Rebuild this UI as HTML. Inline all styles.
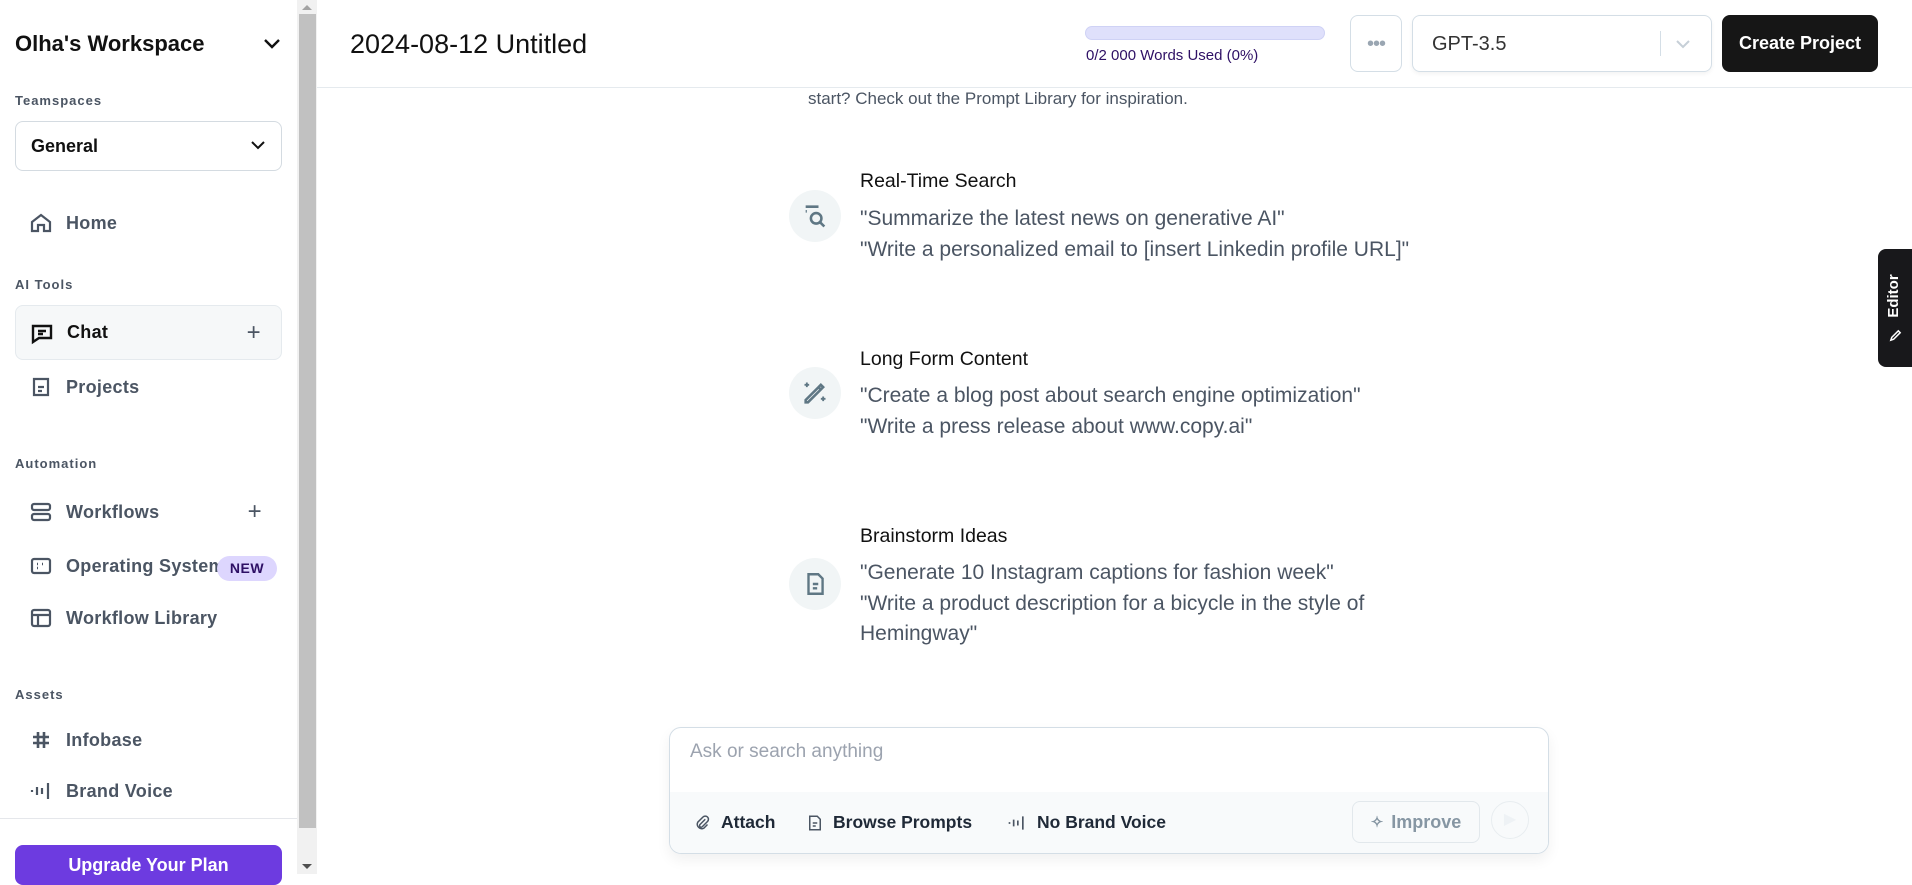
<!DOCTYPE html>
<html><head><meta charset="utf-8"><style>
*{box-sizing:border-box;margin:0;padding:0}
body{width:1912px;height:874px;overflow:hidden;background:#fff;font-family:"Liberation Sans",sans-serif;position:relative;color:#111}
.a{position:absolute}
.sec{position:absolute;left:15px;font-size:13px;color:#4b5563;font-weight:600;letter-spacing:1px}
.it{position:absolute;left:15px;width:267px;height:50px;display:flex;align-items:center;padding-left:14px;font-size:18px;font-weight:600;color:#4b5563;letter-spacing:.3px}
.it svg{width:24px;height:24px;margin-right:13px;flex:none}
.plus{position:absolute;right:20px;font-size:24px;font-weight:300;color:#4b5563}
.circ{position:absolute;left:789px;width:52px;height:52px;border-radius:50%;background:#f1f5f6;display:flex;align-items:center;justify-content:center}
.ttl{position:absolute;left:860px;font-size:19.5px;color:#111}
.ex{position:absolute;left:860px;font-size:21px;color:#4b5563;line-height:30.5px;width:580px}
.fb{position:absolute;top:812px;display:flex;align-items:center;font-size:17.5px;font-weight:600;color:#1f2937}
</style></head><body>
<div class="a" style="left:0;top:0;width:297px;height:874px;background:#fff"></div>
<div class="a" style="left:15px;top:31px;font-size:22px;font-weight:700;color:#111">Olha's Workspace</div>
<svg class="a" style="left:262px;top:36px" width="20" height="14" viewBox="0 0 20 14"><path d="M3 4l7 7 7-7" fill="none" stroke="#111" stroke-width="2.4"/></svg>
<div class="sec" style="top:93px">Teamspaces</div>
<div class="a" style="left:15px;top:121px;width:267px;height:50px;border:1px solid #d4dbe1;border-radius:8px"></div>
<div class="a" style="left:31px;top:136px;font-size:18px;font-weight:600">General</div>
<svg class="a" style="left:249px;top:139px" width="18" height="12" viewBox="0 0 18 12"><path d="M3 3l6 6 6-6" fill="none" stroke="#111" stroke-width="2"/></svg>
<div class="it" style="top:198px"><svg viewBox="0 0 24 24" fill="none" stroke="#4b5563" stroke-width="2.2"><path d="M3 11l9-7 9 7v9h-6v-6h-6v6H3z"/></svg>Home</div>
<div class="sec" style="top:277px">AI Tools</div>
<div class="it" style="top:305px;height:55px;background:#f6f8f9;border:1px solid #e5eaee;border-radius:8px;color:#111"><svg viewBox="0 0 24 24" fill="none" stroke="#111" stroke-width="2.4"><path d="M3 5h18v12H9l-6 4z"/><path d="M8 10h8M8 13h5"/></svg>Chat<span class="plus">+</span></div>
<div class="it" style="top:362px"><svg viewBox="0 0 24 24" fill="none" stroke="#4b5563" stroke-width="2.2"><path d="M5 4h14v16H5z"/><path d="M9 12h6M9 16h4"/></svg>Projects</div>
<div class="sec" style="top:456px">Automation</div>
<div class="it" style="top:487px"><svg viewBox="0 0 24 24" fill="none" stroke="#4b5563" stroke-width="2.2"><rect x="3" y="4" width="18" height="6" rx="2"/><rect x="3" y="14" width="18" height="6" rx="2"/></svg>Workflows<span class="plus">+</span></div>
<div class="it" style="top:541px;white-space:nowrap;overflow:visible"><svg viewBox="0 0 24 24" fill="none" stroke="#4b5563" stroke-width="2.2"><rect x="3" y="5" width="18" height="14" rx="2"/><path d="M8 10h1M13 10h1M8 14h1" stroke-width="2.5"/></svg>Operating System</div>
<div class="a" style="left:217px;top:556px;width:60px;height:25px;background:#ddd6fe;border-radius:13px;font-size:14px;font-weight:700;color:#2e1065;text-align:center;line-height:25px;letter-spacing:.5px">NEW</div>
<div class="it" style="top:593px"><svg viewBox="0 0 24 24" fill="none" stroke="#4b5563" stroke-width="2.2"><rect x="3" y="4" width="18" height="16" rx="2"/><path d="M3 9h18M9 9v11"/></svg>Workflow Library</div>
<div class="sec" style="top:687px">Assets</div>
<div class="it" style="top:715px"><svg viewBox="0 0 24 24" fill="none" stroke="#4b5563" stroke-width="2.6"><path d="M9 4v16M15 4v16M4 9h16M4 15h16"/></svg>Infobase</div>
<div class="it" style="top:766px"><svg viewBox="0 0 24 24" fill="none" stroke="#4b5563" stroke-width="2.2"><path d="M3 11v2M8 8v8M13 9v6M19 4v16"/></svg>Brand Voice</div>
<div class="a" style="left:0;top:818px;width:297px;height:1px;background:#e5e7eb"></div>
<div class="a" style="left:15px;top:845px;width:267px;height:40px;background:#6d3be0;border-radius:8px;color:#fff;font-size:18px;font-weight:700;text-align:center;line-height:40px">Upgrade Your Plan</div>
<div class="a" style="left:297px;top:0;width:20px;height:874px;background:#f1f1f1"></div>
<div class="a" style="left:299px;top:14px;width:17px;height:814px;background:#c1c1c1"></div>
<div class="a" style="left:302px;top:5px;width:0;height:0;border:5px solid transparent;border-bottom-color:#a3a3a3;border-top:0"></div>
<div class="a" style="left:302px;top:864px;width:0;height:0;border:5px solid transparent;border-top-color:#505050;border-bottom:0"></div>
<div class="a" style="left:317px;top:87px;width:1595px;height:1px;background:#e5eaee"></div>
<div class="a" style="left:350px;top:29px;font-size:27px;color:#111">2024-08-12 Untitled</div>
<div class="a" style="left:1085px;top:26px;width:240px;height:14px;background:#dfe0fb;border-radius:7px;border:1px solid #cfd2f5"></div>
<div class="a" style="left:1086px;top:47px;font-size:15px;color:#2e1065">0/2 000 Words Used (0%)</div>
<div class="a" style="left:1350px;top:15px;width:52px;height:57px;border:1px solid #d4dee6;border-radius:8px;text-align:center;line-height:57px;color:#9aa6b2;font-size:20px;letter-spacing:-1px">•••</div>
<div class="a" style="left:1412px;top:15px;width:300px;height:57px;border:1px solid #d4dee6;border-radius:8px;box-shadow:0 2px 4px rgba(0,0,0,.05)"></div>
<div class="a" style="left:1432px;top:33px;font-size:20px;color:#333">GPT-3.5</div>
<div class="a" style="left:1660px;top:31px;width:1px;height:25px;background:#d4dee6"></div>
<svg class="a" style="left:1675px;top:38px" width="16" height="12" viewBox="0 0 16 12"><path d="M2 3l6 6 6-6" fill="none" stroke="#c6cfd7" stroke-width="2"/></svg>
<div class="a" style="left:1722px;top:15px;width:156px;height:57px;background:#161616;border-radius:8px;color:#fff;font-size:18px;font-weight:700;text-align:center;line-height:57px">Create Project</div>
<div class="a" style="left:808px;top:89px;font-size:17px;color:#4b5563">start? Check out the Prompt Library for inspiration.</div>
<div class="circ" style="top:190px"><svg width="28" height="28" viewBox="0 0 24 24" fill="none" stroke="#5f7784" stroke-width="2.2"><path d="M4 4h11M4 8h1"/><circle cx="13" cy="14" r="4.5"/><path d="M16.5 17.5L20 21"/></svg></div>
<div class="ttl" style="top:170px">Real-Time Search</div>
<div class="ex" style="top:204px">"Summarize the latest news on generative AI"<br>"Write a personalized email to [insert Linkedin profile URL]"</div>
<div class="circ" style="top:367px"><svg width="28" height="28" viewBox="0 0 24 24" fill="none" stroke="#5f7784" stroke-width="2.2"><path d="M6 20l-2 0 0-2L15 7l2 2z M15 7l2-2 2 2-2 2"/><path d="M5 3v4M3 5h4M19 15v4M17 17h4" stroke-width="1.6"/></svg></div>
<div class="ttl" style="top:348px">Long Form Content</div>
<div class="ex" style="top:381px">"Create a blog post about search engine optimization"<br>"Write a press release about www.copy.ai"</div>
<div class="circ" style="top:558px"><svg width="26" height="26" viewBox="0 0 24 24" fill="none" stroke="#5f7784" stroke-width="2.2"><path d="M6 3h9l4 4v14H6z"/><path d="M10 12h5M10 16h4"/></svg></div>
<div class="ttl" style="top:525px">Brainstorm Ideas</div>
<div class="ex" style="top:558px">"Generate 10 Instagram captions for fashion week"<br>"Write a product description for a bicycle in the style of Hemingway"</div>
<div class="a" style="left:1878px;top:249px;width:34px;height:118px;background:#18181b;border-radius:8px 0 0 8px"></div>
<div class="a" style="left:1864px;top:286px;width:62px;height:20px;transform:rotate(-90deg);color:#fff;font-size:15px;font-weight:700;text-align:center">Editor</div>
<svg class="a" style="left:1888px;top:328px" width="15" height="15" viewBox="0 0 16 16"><path d="M3 13l1-3 7-7 2 2-7 7z" fill="none" stroke="#fff" stroke-width="1.6"/></svg>
<div class="a" style="left:669px;top:727px;width:880px;height:127px;border:1px solid #d4dee6;border-radius:12px;overflow:hidden;box-shadow:0 6px 14px rgba(0,0,0,.06)">
<div class="a" style="left:0;top:64px;width:100%;height:70px;background:#f8fafb"></div>
</div>
<div class="a" style="left:690px;top:741px;font-size:19px;color:#9ca3af">Ask or search anything</div>
<div class="fb" style="left:694px"><svg width="18" height="18" viewBox="0 0 24 24" fill="none" stroke="#4b5563" stroke-width="2"><path d="M15 7l-7 7a2 2 0 003 3l7-7a4 4 0 00-6-6l-7 7a6 6 0 008 8l5-5"/></svg><span style="margin-left:9px">Attach</span></div>
<div class="fb" style="left:807px"><svg width="16" height="18" viewBox="0 0 20 24" fill="none" stroke="#4b5563" stroke-width="2"><path d="M3 3h10l4 4v14H3z"/><path d="M7 12h6M7 16h4"/></svg><span style="margin-left:10px">Browse Prompts</span></div>
<div class="fb" style="left:1006px"><svg width="22" height="20" viewBox="0 0 24 24" fill="none" stroke="#4b5563" stroke-width="2"><path d="M3 11v2M8 8v8M13 9v6M19 4v16"/></svg><span style="margin-left:9px">No Brand Voice</span></div>
<div class="a" style="left:1352px;top:801px;width:128px;height:42px;border:1px solid #e2e8ec;border-radius:8px;display:flex;align-items:center;justify-content:center;color:#8696a3;font-size:18px;font-weight:600"><span style="font-size:15px;margin-right:8px">✧</span>Improve</div>
<div class="a" style="left:1491px;top:801px;width:38px;height:38px;border:1px solid #e8edf0;border-radius:50%;color:#eef2f5;text-align:center;line-height:36px;font-size:16px">▶</div>
</body></html>
